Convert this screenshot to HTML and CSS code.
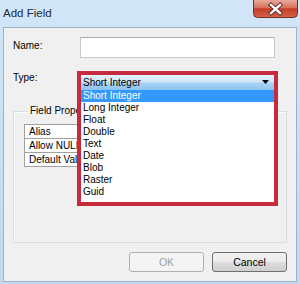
FILE: index.html
```html
<!DOCTYPE html>
<html lang="en">
<head>
    <meta charset="UTF-8">
    <title>Add Field</title>
    <link rel="stylesheet" href="styles.css">
</head>
<body>
    <div class="window">
        <!-- Title bar -->
        <div class="titlebar">
            <span class="title">Add Field</span>
            <span class="close">
                <svg width="45" height="18" viewBox="0 0 45 18">
                    <defs>
                        <linearGradient id="closeBg" x1="0" y1="0" x2="0" y2="1">
                            <stop offset="0" stop-color="#e9a99b"/>
                            <stop offset="0.45" stop-color="#d7705c"/>
                            <stop offset="0.5" stop-color="#c23d26"/>
                            <stop offset="1" stop-color="#d5644c"/>
                        </linearGradient>
                    </defs>
                    <path d="M0.5 0 V13.5 Q0.5 17.5 4.5 17.5 H40.5 Q44.5 17.5 44.5 13.5 V0" fill="url(#closeBg)" stroke="#7a2a1e"/>
                    <path d="M18 5 L27 13 M27 5 L18 13" stroke="#5a2018" stroke-width="4.2" stroke-linecap="square"/>
                    <path d="M18 5 L27 13 M27 5 L18 13" stroke="#ffffff" stroke-width="2.4" stroke-linecap="square"/>
                </svg>
            </span>
        </div>

        <div class="client">
            <div class="field-row name-row">
                <span class="label">Name:</span>
                <div class="textbox"></div>
            </div>

            <div class="field-row type-row">
                <span class="label">Type:</span>
                <div class="combo-slot">
                    <!-- dropped down list, highlighted -->
                    <div class="highlight">
                        <div class="combo-head">
                            <span>Short Integer</span>
                            <svg class="arrow" width="7" height="4" viewBox="0 0 7 4"><path d="M0 0 H7 L3.5 4 Z" fill="#000"/></svg>
                        </div>
                        <ul class="combo-list">
                            <li class="selected">Short Integer</li>
                            <li>Long Integer</li>
                            <li>Float</li>
                            <li>Double</li>
                            <li>Text</li>
                            <li>Date</li>
                            <li>Blob</li>
                            <li>Raster</li>
                            <li>Guid</li>
                        </ul>
                    </div>
                </div>
            </div>

            <fieldset class="props">
                <legend>Field Properties</legend>
                <table class="prop-table">
                    <tr><td class="prop-name">Alias</td><td></td></tr>
                    <tr><td class="prop-name">Allow NULL Values</td><td></td></tr>
                    <tr><td class="prop-name">Default Value</td><td></td></tr>
                </table>
            </fieldset>

            <div class="buttons">
                <button class="btn" disabled>OK</button>
                <button class="btn">Cancel</button>
            </div>
        </div>
    </div>
</body>
</html>
```

FILE: styles.css
```css
:root {
    --client-bg: #f0f0f0;
    --red: #c62a3c;
    --select-blue: #3399ff;
}

* {
    box-sizing: border-box;
}

body {
    margin: 0;
    font-family: 'Liberation Sans', Arial, sans-serif;
    font-size: 10px;
    color: #000000;
}

.window {
    width: 300px;
    height: 284px;
    display: flex;
    flex-direction: column;
    background: linear-gradient(#d2e6f8, #c0d8f0);
}

.titlebar {
    height: 27px;
    display: flex;
    justify-content: space-between;
    align-items: flex-start;
    padding-left: 3px;
}

.title {
    font-size: 11.5px;
    line-height: 27px;
    color: #1e2a36;
}

.close {
    display: block;
    width: 45px;
    height: 18px;
    margin-right: 2px;
}

.close svg {
    display: block;
}

.client {
    flex: 1;
    margin: 0 3px 2px 3px;
    background: var(--client-bg);
    border: 1px solid #9fb3c8;
    display: flex;
    flex-direction: column;
    padding: 0 9px 0 9px;
}

/* Rows */
.field-row {
    display: flex;
    align-items: flex-start;
}

.label {
    width: 67px;
    line-height: 12px;
}

.name-row {
    margin-top: 9px;
}

.name-row .label {
    margin-top: 3px;
}

.textbox {
    width: 195px;
    height: 21px;
    background: #ffffff;
    border: 1px solid #c6cad0;
    border-top-color: #abadb3;
}

.type-row {
    margin-top: 14px;
}

.type-row .label {
    margin-top: 0;
}

.combo-slot {
    position: relative;
    width: 195px;
    height: 21px;
}

/* Dropdown overlay */
.highlight {
    position: absolute;
    top: -1px;
    left: -3px;
    width: 201px;
    height: 135px;
    border: 4px solid var(--red);
    background: #ffffff;
    z-index: 2;
}

.combo-head {
    height: 15px;
    display: flex;
    justify-content: space-between;
    align-items: center;
    padding: 0 5px 0 2px;
    background: linear-gradient(#e4f1fc 0%, #cde5f8 45%, #a9d2f4 55%, #8cc3ef 100%);
    line-height: 15px;
}

.arrow {
    display: block;
    margin-top: -1px;
}

.combo-list {
    list-style: none;
    margin: 0;
    padding: 0;
}

.combo-list li {
    height: 12px;
    line-height: 12px;
    padding-left: 2px;
}

.combo-list .selected {
    background: var(--select-blue);
    color: #ffffff;
}

/* Group box */
.props {
    margin: 12px 0 0 0;
    padding: 7px 0 0 10px;
    height: 138px;
    border: 1px solid #d5dfe5;
    box-shadow: inset 1px 1px 0 #ffffff;
}

.props legend {
    padding: 0 2px;
    margin-left: 4px;
    line-height: 12px;
}

.prop-table {
    border-collapse: collapse;
    width: 200px;
}

.prop-table td {
    height: 14px;
    border: 1px solid #a0a0a0;
    background: #ffffff;
    padding: 0 0 0 4px;
    line-height: 12px;
    white-space: nowrap;
}

.prop-table .prop-name {
    width: 90px;
}

/* Buttons */
.buttons {
    display: flex;
    justify-content: flex-end;
    gap: 8px;
    margin-top: 9px;
}

.btn {
    width: 75px;
    height: 20px;
    font-family: inherit;
    font-size: 10.5px;
    border: 1px solid #707070;
    border-radius: 3px;
    background: linear-gradient(#f2f2f2 0%, #ebebeb 50%, #dddddd 51%, #cfcfcf 100%);
    color: #000000;
    padding: 0;
}

.btn:disabled {
    border-color: #adb2b5;
    background: #f4f4f4;
    color: #a0a0a0;
}
```
